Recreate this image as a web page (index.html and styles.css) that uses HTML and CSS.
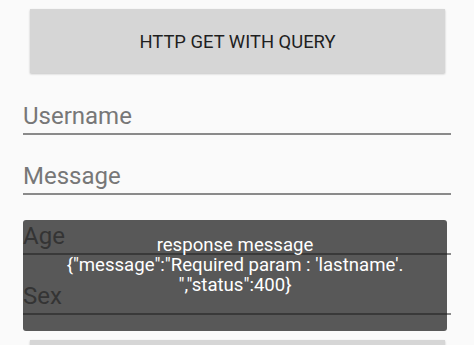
FILE: index.html
```html
<!DOCTYPE html>
<html>
<head>
<meta charset="utf-8">
<link rel="stylesheet" href="styles.css">
</head>
<body>
<div class="screen">
  <div class="btn">HTTP GET WITH QUERY</div>
  <div class="fields">
    <div class="field"><span class="hint">Username</span></div>
    <div class="field"><span class="hint">Message</span></div>
    <div class="field"><span class="hint">Age</span></div>
    <div class="field"><span class="hint">Sex</span></div>
  </div>
  <div class="btn btn-bottom"></div>
  <div class="toast">
    <div class="toast-text">response message<br>{"message":"Required param : 'lastname'.<br>","status":400}</div>
  </div>
</div>
</body>
</html>
```
FILE: styles.css
```css
html, body {
  margin: 0;
  padding: 0;
  background: #fafafa;
}
.screen {
  position: relative;
  width: 474px;
  height: 345px;
  overflow: hidden;
  font-family: Roboto, "Noto Sans", sans-serif;
  padding: 9px 23px 0;
  box-sizing: border-box;
}
.btn {
  margin: 0 6px 0 7px;
  height: 64px;
  background: #d6d6d6;
  box-shadow: 0 1px 2px rgba(0,0,0,0.22);
  display: flex;
  align-items: center;
  justify-content: center;
  font-size: 18.4px;
  color: #1f1f1f;
}
.fields {
  display: flex;
  flex-direction: column;
  margin-top: 2px;
}
.field {
  height: 54px;
  border-bottom: 2px solid #8a8a8a;
  display: flex;
  align-items: flex-end;
  padding-bottom: 4px;
}
.hint {
  font-size: 24px;
  line-height: 26px;
  color: #777;
}
.btn-bottom {
  margin-top: 25px;
}
.toast {
  position: absolute;
  left: 23px;
  top: 220px;
  width: 424px;
  height: 111px;
  border-radius: 3px;
  background: rgba(28,28,28,0.73);
  box-sizing: border-box;
  padding-top: 15px;
}
.toast-text {
  color: #fff;
  font-size: 18.6px;
  line-height: 20px;
  text-align: center;
}
```
